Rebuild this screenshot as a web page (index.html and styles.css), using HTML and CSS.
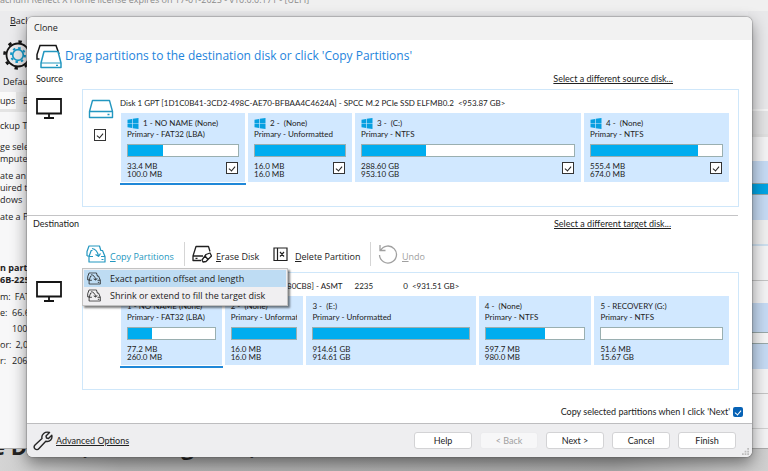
FILE: index.html
```html
<!DOCTYPE html>
<html lang="en">
<head>
<meta charset="utf-8">
<title>Clone</title>
<link rel="stylesheet" href="styles.css">
</head>
<body>
<svg class="defs" aria-hidden="true">
  <symbol id="disk" viewBox="0 0 26 20"><path d="M4.500 1.500h17l3 11v6h-23v-6zM1.500 12.500h23M19.500 15.500h2" fill="none" stroke="currentColor" stroke-width="1.400" stroke-linejoin="round"/></symbol>
  <symbol id="monitor" viewBox="0 0 26 22"><path d="M1 1h24v14.500H1z" fill="none" stroke="#151515" stroke-width="1.800"/><path d="M13 15v5M8 20h10" stroke="#151515" stroke-width="1.800" fill="none"/></symbol>
  <symbol id="windows" viewBox="0 0 12 12"><path fill="#069fe0" d="M0 1.800 5 1v4.600H0zM5.700.9 12 0v5.600H5.700zM0 6.300h5V11l-5-.8zM5.700 6.300H12V12l-6.300-.9z"/></symbol>
  <symbol id="copy" viewBox="0 0 20 18"><g fill="none" stroke="currentColor" stroke-width="1.200" stroke-linejoin="round"><path d="M1 11V6.500L3 1h10.500l1.300 4.500M1 11h2.500M6.500 5.500H5.200L3 11.500V17h16v-5.500l-2.500-6h-2M3 11.500h4M15 11.500h4M15.500 14.500h2"/><path d="M6 3.500c3 .5 5.500 2.500 6.500 7.500M14.500 8.500l-2 2.800-3-1.800"/></g></symbol>
</svg>

<main class="desktop">
  <div class="headline" aria-hidden="true"><span>e D</span><span>,</span><span>g</span><span>,</span></div>

  <section class="app">
    <header class="app-title">acrium Reflect X Home license expires on 17-01-2025 - v10.0.0.171 - [UEFI]</header>
    <div class="app-tools">
      <p class="app-menu"><u>B</u>ackup</p>
      <svg class="gear" viewBox="0 0 32 32" aria-hidden="true"><g fill="none"><circle cx="16" cy="16" r="13.500" stroke="#151515" stroke-width="2.600" stroke-dasharray="3.400 7.203"/><circle cx="16" cy="16" r="11.500" stroke="#151515" stroke-width="1.800"/><circle cx="16" cy="16" r="7" stroke="#1599c8" stroke-width="2" stroke-dasharray="2.500 2.998"/><circle cx="16" cy="16" r="5.300" stroke="#1599c8" stroke-width="1.700"/></g></svg>
      <p>Default</p>
    </div>
    <div class="app-tabs"><span>ups</span><span class="tab-other">Existing</span></div>
    <div class="app-side">
      <p class="task-head">ckup Tasks</p>
      <p>ge selected<br>mputer</p>
      <p>ate an image<br>uired to<br>dows</p>
      <p>ate a File</p>
      <div class="details">
        <p class="strong">n partition<br>6B-225</p>
        <dl>
          <div><dt>m:</dt><dd>FAT32</dd></div>
          <div><dt>e:</dt><dd>66.6</dd></div>
          <div><dt></dt><dd>100</dd></div>
          <div><dt>or:</dt><dd>2,048</dd></div>
          <div><dt>r:</dt><dd>206</dd></div>
        </dl>
      </div>
    </div>
    <div class="app-edge" aria-hidden="true"><i class="e1"></i><i class="e2"></i><i class="e3"></i><i class="sel"></i><i class="fill"></i><i class="sel"></i><i class="e4"></i><i class="e5"></i><i class="e6"></i><i class="sel s2"></i><i class="empty"></i><i class="sel s3"></i><i class="e7"></i><i class="e8"></i></div>
  </section>

  <section class="dialog" role="dialog" aria-labelledby="dlg-title">
    <header class="titlebar" id="dlg-title">Clone</header>
    <div class="content">
      <div class="heading">
        <svg viewBox="0 0 26 25" aria-hidden="true"><path d="M3.500 15H1V10.500L4 1.500h16L23 10" fill="none" stroke="#151515" stroke-width="1.500"/><path d="M8 7.500h14l3 11.500v4.500H5V19z" fill="#fff" stroke="#2397c0" stroke-width="1.500" stroke-linejoin="round"/><path d="M5 19h20M20 21.300h2" stroke="#2397c0" stroke-width="1.200"/></svg>
        <h1>Drag partitions to the destination disk or click 'Copy Partitions'</h1>
      </div>

      <div class="section-head"><h2 class="source-label">Source</h2><a href="#">Select a different source disk...</a></div>
      <div class="disk-row">
        <svg class="monitor" aria-hidden="true"><use href="#monitor"/></svg>
        <div class="panel">
          <div class="disk-side">
            <svg class="disk" aria-hidden="true"><use href="#disk"/></svg>
            <input type="checkbox" checked aria-label="Disk 1">
          </div>
          <div class="disk-main">
            <p class="disk-name">Disk 1 GPT [1D1C0B41-3CD2-498C-AE70-BFBAA4C4624A] - SPCC M.2 PCIe SSD ELFMB0.2 &nbsp;&lt;953.87 GB&gt;</p>
            <div class="parts source-parts">
              <article class="part selected">
                <h3><svg aria-hidden="true"><use href="#windows"/></svg>1 - NO NAME (None)</h3><p>Primary - FAT32 (LBA)</p>
                <div class="bar"><i style="width:32%"></i></div>
                <div class="sizes"><p>33.4 MB<br>100.0 MB</p><input type="checkbox" checked aria-label="Partition 1"></div>
              </article>
              <article class="part">
                <h3><svg aria-hidden="true"><use href="#windows"/></svg>2 - &nbsp;(None)</h3><p>Primary - Unformatted</p>
                <div class="bar"><i style="width:100%"></i></div>
                <div class="sizes"><p>16.0 MB<br>16.0 MB</p><input type="checkbox" checked aria-label="Partition 2"></div>
              </article>
              <article class="part">
                <h3><svg aria-hidden="true"><use href="#windows"/></svg>3 - &nbsp;(C:)</h3><p>Primary - NTFS</p>
                <div class="bar"><i style="width:30%"></i></div>
                <div class="sizes"><p>288.60 GB<br>953.10 GB</p><input type="checkbox" checked aria-label="Partition 3"></div>
              </article>
              <article class="part">
                <h3><svg aria-hidden="true"><use href="#windows"/></svg>4 - &nbsp;(None)</h3><p>Primary - NTFS</p>
                <div class="bar"><i style="width:82%"></i></div>
                <div class="sizes"><p>555.4 MB<br>674.0 MB</p><input type="checkbox" checked aria-label="Partition 4"></div>
              </article>
            </div>
          </div>
        </div>
      </div>

      <div class="section-head destination"><h2>Destination</h2><a href="#">Select a different target disk...</a></div>
      <div class="toolbar">
        <button class="tool copy"><svg viewBox="0 0 20 18" aria-hidden="true"><use href="#copy"/></svg><span><u>C</u>opy Partitions</span></button>
        <button class="tool erase"><svg viewBox="0 0 20 18" aria-hidden="true"><g fill="none" stroke="#202020" stroke-width="1.300" stroke-linejoin="round"><path d="M9 15.500H1V11L4 1.500h12.500l1.500 5M1 11h10M3.500 13.300h2"/><path d="M14 9.500l4-1.500 1.500 3-5.500 5.500-3 .5-1-2zM13 11l3 3.500"/></g></svg><span><u>E</u>rase Disk</span></button>
        <button class="tool delete"><svg viewBox="0 0 15 15" aria-hidden="true"><path d="M1 1h13v12.500H1zM4.500 1v12.500M7 5l4 4.500M11 5 7 9.500" fill="none" stroke="#202020" stroke-width="1.200"/></svg><span><u>D</u>elete Partition</span></button>
        <button class="tool undo" disabled><svg viewBox="0 0 20 20" aria-hidden="true"><path d="M2.500 6.500A8.500 8.500 0 1 1 1.500 11M2 1v5.500h5.500" fill="none" stroke="#a0a0a0" stroke-width="1.300"/></svg><span><u>U</u>ndo</span></button>
        <div class="menu" role="menu">
          <button class="active" role="menuitem"><svg viewBox="0 0 20 18" aria-hidden="true"><use href="#copy"/></svg>Exact partition offset and length</button>
          <button role="menuitem"><svg viewBox="0 0 20 18" aria-hidden="true"><use href="#copy"/></svg>Shrink or extend to fill the target disk</button>
        </div>
      </div>
      <div class="disk-row">
        <svg class="monitor" aria-hidden="true"><use href="#monitor"/></svg>
        <div class="panel">
          <div class="disk-side"></div>
          <div class="disk-main">
            <p class="disk-name target-name"><span>80CB8] - ASMT</span><span>2235</span><span>0 &nbsp;&lt;931.51 GB&gt;</span></p>
            <div class="parts target-parts">
              <article class="part selected">
                <h3>1 - NO NAME (None)</h3><p>Primary - FAT32 (LBA)</p>
                <div class="bar"><i style="width:28%"></i></div>
                <div class="sizes"><p>77.2 MB<br>260.0 MB</p></div>
              </article>
              <article class="part">
                <h3>2 - &nbsp;(None)</h3><p>Primary - Unformatted</p>
                <div class="bar"><i style="width:100%"></i></div>
                <div class="sizes"><p>16.0 MB<br>16.0 MB</p></div>
              </article>
              <article class="part">
                <h3>3 - &nbsp;(E:)</h3><p>Primary - Unformatted</p>
                <div class="bar"><i style="width:100%"></i></div>
                <div class="sizes"><p>914.61 GB<br>914.61 GB</p></div>
              </article>
              <article class="part">
                <h3>4 - &nbsp;(None)</h3><p>Primary - NTFS</p>
                <div class="bar"><i style="width:60%"></i></div>
                <div class="sizes"><p>597.7 MB<br>980.0 MB</p></div>
              </article>
              <article class="part">
                <h3>5 - RECOVERY (G:)</h3><p>Primary - NTFS</p>
                <div class="bar"><i style="width:0%"></i></div>
                <div class="sizes"><p>51.6 MB<br>15.67 GB</p></div>
              </article>
            </div>
          </div>
        </div>
      </div>
      <div class="copy-option"><label for="copy-next">Copy selected partitions when I click 'Next'</label><input id="copy-next" type="checkbox" checked></div>
    </div>
    <footer class="footer">
      <svg class="wrench" viewBox="0 0 20 20" aria-hidden="true"><path d="M16.500 1.500 13 5l.5 2 2 .5 3.300-3.200c.8 3.500-1.800 6.900-6 6L6 17.500c-2.500 3-6.500-.5-4-3.500l7-6.500C8 3.500 12 0 16.500 1.500z" fill="none" stroke="#252525" stroke-width="1.400" stroke-linejoin="round"/></svg>
      <a href="#">Advanced Options</a>
      <div class="actions"><button>Help</button><button disabled>&lt; Back</button><button>Next &gt;</button><button>Cancel</button><button>Finish</button></div>
      <svg class="grip" viewBox="0 0 8 8" aria-hidden="true"><path d="M6 0h2v2H6zM3 3h2v2H3zM6 3h2v2H6zM0 6h2v2H0zM3 6h2v2H3zM6 6h2v2H6z" fill="#bcbcbc"/></svg>
    </footer>
  </section>
</main>
</body>
</html>
```
FILE: styles.css
```css
* { box-sizing: border-box; }
body, h1, h2, h3, p, dl, dd { margin: 0; }
body {
  font: 9px/12px Lato, "Noto Sans", sans-serif;
  color: #222;
}
h1, h2, h3 { font-weight: 400; font-size: inherit; }
button, input { font: inherit; color: inherit; margin: 0; }
button { padding: 0; border: 0; background: none; }
a { color: inherit; text-underline-offset: 1px; }
i { display: block; }
svg { flex: none; }
.defs { display: none; }

.desktop {
  position: relative;
  min-height: 100vh;
  overflow: hidden;
  background: linear-gradient(90deg, #d4d4d4, #b6b6b6 120px, #adadad 80%, #cfcfcf);
}
.headline {
  position: absolute;
  left: -8px;
  bottom: 11px;
  display: flex;
  gap: 56px;
  font: 700 22px/28px "Open Sans", sans-serif;
  color: #222;
}
.headline span + span + span { margin-left: 36px; }
.headline span + span + span + span { margin-left: 0; }

/* Main window behind the dialog */
.app {
  position: absolute;
  inset: 0 0 22px;
  overflow: hidden;
  background: #f7f7f8;
  border-bottom: 1px solid #aaa;
  white-space: nowrap;
  font-family: "Open Sans", sans-serif;
}
.app-title { height: 17px; margin-top: -6px; color: #8a8a8a; background: #f0f0f0; }
.app-tools { height: 81px; background: #ebebed; padding: 4px 3px 0; }
.app-menu { padding-left: 7px; }
.gear { display: block; width: 32px; height: 32px; margin: 12px 0 5px -1px; }
.app-tabs { display: flex; height: 20px; margin-bottom: 8px; background: #eee; line-height: 18px; border-bottom: 3px solid #e4e4e4; }
.app-tabs span { width: 16px; background: #fafafa; }
.app-tabs .tab-other { width: 60px; padding-left: 7px; background: #e6e6e6; }
.app-side > p { margin-bottom: 5px; }
.app-side .task-head { margin-bottom: 9px; }
.details { margin-top: 39px; }
.details .strong { font-weight: 700; margin-bottom: 3px; }
.details dl div { display: flex; gap: 4px; height: 16px; line-height: 16px; }
.details dt { min-width: 8px; }
.app-edge { position: absolute; inset: 11px 0 0 auto; width: 20px; background: #f3f3f4; }
.e1 { height: 98px; background: #e8e8ea; }
.e2 { height: 25px; background: #e3e3e4; border-top: 2px solid #f4f4f4; }
.e3 { height: 27px; border-top: 3px solid #dfdfdf; }
.sel { height: 22px; background: #c5daf3; }
.fill { height: 12px; background: #00a4e4; border: 1px solid #92a5a5; border-width: 1px 0; }
.fill + .sel { height: 25px; }
.e4 { height: 24px; background: #efefef; }
.e5 { height: 36px; border-top: 2px solid #cddfee; }
.e6 { height: 23px; border-top: 1px solid #c4c4c4; }
.s2 { height: 29px; }
.empty { height: 12px; border: 1px solid #98a8a8; border-width: 1px 0; background: #f5f5f5; }
.s3 { height: 25px; }
.e7 { height: 25px; border-bottom: 1px solid #c4c4c4; }
.e8 { height: 35px; border-bottom: 1px solid #d0d0d0; }

/* Clone dialog */
.dialog {
  position: absolute;
  left: 27px;
  right: 16px;
  top: 17px;
  border-radius: 6px;
  background: #fff;
  box-shadow: 0 0 1px 1px rgba(80, 80, 80, .3), 0 6px 16px rgba(0, 0, 0, .45);
}
.titlebar { height: 23px; padding: 5px 7px; font-family: "Open Sans", sans-serif; background: #f2f2f2; border-radius: 6px 6px 0 0; }
.content { border-bottom: 1px solid #bdbdbf; }
.heading { display: flex; align-items: center; gap: 3px; height: 32px; padding-left: 9px; }
.heading svg { width: 26px; height: 25px; }
.heading h1 { font: 12px/18px "Open Sans", sans-serif; color: #1e84dc; white-space: nowrap; }
.section-head { display: flex; justify-content: space-between; height: 17px; padding: 1px 79px 0 6px; }
.source-label { padding-left: 3px; }
.destination { margin: 8px 14px 0 0; padding: 2px 67px 0 6px; border-top: 1px solid #c4c4c6; }
.disk-row { display: flex; padding: 0 13px 0 9px; gap: 20px; }
.monitor { width: 26px; height: 22px; margin-top: 9px; }
.panel { flex: 1; min-width: 0; display: flex; height: 118px; border: 1px solid #cfe7fa; }
.disk-side { flex: none; width: 37px; padding: 9px 5px 0; display: flex; flex-direction: column; gap: 10px; }
.disk-side input { margin-left: 6px; }
.disk { width: 26px; height: 20px; color: #2397c0; }
.disk-main { flex: 1; min-width: 0; padding-right: 9px; }
.disk-name { height: 23px; padding-top: 7px; font-size: 8px; white-space: nowrap; }
.parts { display: grid; gap: 3px; padding-left: 1px; }
.source-parts { grid-template-columns: 124fr 104fr 226fr 145fr; }
.target-parts { grid-template-columns: 101fr 79fr 170fr 113fr 135fr; }
.part { position: relative; min-width: 0; padding: 5px 6px 4px; background: #d1e8ff; font-size: 8px; white-space: nowrap; }
.part > p { overflow: hidden; }
.selected::after { content: ""; position: absolute; inset: auto -1px -3px; height: 2px; background: #2088d8; }
.part h3 { display: flex; align-items: center; gap: 4px; height: 11px; line-height: 11px; }
.part h3 svg { width: 12px; height: 11px; }
.part > p { height: 10px; line-height: 10px; }
.bar { height: 13px; margin: 5px 0; border: 1px solid #9aafb0; background: #fff; }
.bar i { height: 100%; background: #00adef; }
.sizes { display: flex; justify-content: space-between; height: 16px; line-height: 8px; }
.sizes input { margin-right: 1px; }

input[type="checkbox"] {
  appearance: none;
  flex: none;
  width: 12px;
  height: 12px;
  border: 1px solid #333;
  background: #fff;
  display: grid;
  place-items: center;
}
input[type="checkbox"]:checked::before {
  content: "";
  width: 3px;
  height: 5px;
  border: solid #222;
  border-width: 0 1px 1px 0;
  transform: rotate(40deg);
}

.toolbar { position: relative; display: flex; height: 40px; padding: 10px 0 6px 59px; font-family: "Open Sans", sans-serif; }
.tool { flex: none; display: flex; align-items: center; gap: 4px; height: 24px; white-space: nowrap; color: #222; }
.tool svg { width: 20px; height: 18px; }
.tool span { padding-top: 6px; }
.copy { color: #2397c0; width: 99px; border-right: 1px solid #d5d5d5; }
.erase { width: 81px; padding-left: 7px; }
.delete { width: 105px; gap: 7px; padding-left: 7px; border-right: 1px solid #d5d5d5; }
.delete svg { width: 15px; height: 15px; }
.undo { color: #a0a0a0; padding-left: 7px; }
.undo svg { height: 20px; }

.menu {
  position: absolute;
  z-index: 1;
  left: 55px;
  top: 36px;
  width: 206px;
  padding: 1px;
  background: #f0eff1;
  border: 1px solid #c2c2c2;
  box-shadow: 2px 2px 2px rgba(0, 0, 0, .5);
}
.menu button { display: flex; align-items: center; gap: 9px; width: 100%; height: 17px; padding-left: 3px; white-space: nowrap; color: #222; }
.menu .active { background: #bedcf3; }
.menu svg { width: 14px; height: 13px; }

.target-name { display: flex; padding-left: 167px; }
.target-name span { margin-right: 12px; }
.target-name span + span { margin-right: 30px; }

.copy-option { display: flex; justify-content: flex-end; align-items: center; gap: 3px; height: 33px; padding: 11px 9px 0 0; }
#copy-next { width: 10px; height: 10px; border: 0; border-radius: 2px; background: #0762b5; }
#copy-next::before { border-color: #fff; }
.footer { position: relative; display: flex; align-items: center; height: 33px; padding: 0 16px 0 6px; background: #eeeef0; border-radius: 0 0 6px 6px; }
.wrench { width: 20px; height: 20px; margin-right: 3px; }
.actions { display: flex; gap: 8px; margin-left: auto; }
.actions button { width: 58px; height: 17px; background: #fff; border: 1px solid #d3d3d5; border-radius: 3px; }
.actions button:disabled { color: #a0a0a0; background: #f7f7f8; border-color: #ececee; }
.grip { position: absolute; right: 3px; bottom: 2px; width: 7px; height: 7px; }
```
